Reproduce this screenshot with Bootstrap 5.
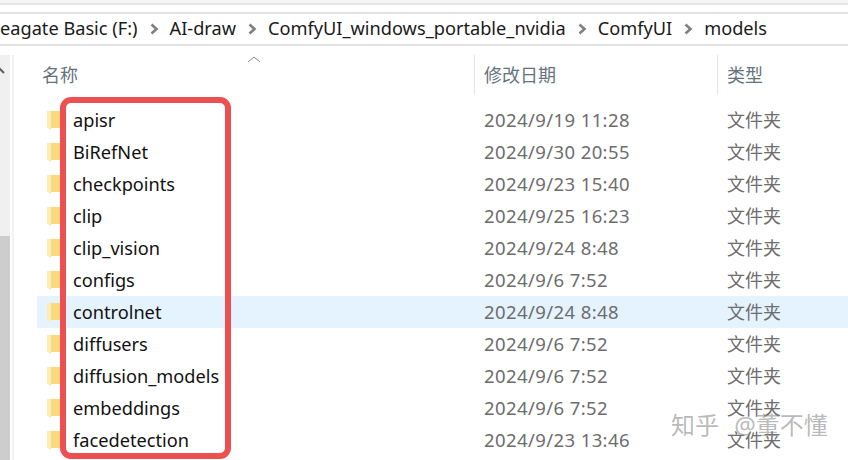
<!DOCTYPE html>
<html lang="en">
<head>
  <meta charset="UTF-8" />
  <title>models</title>
  <link href="https://cdn.jsdelivr.net/npm/bootstrap@5.3.0/dist/css/bootstrap.min.css" rel="stylesheet" />
  <style>
    body {
      width: 848px;
      height: 460px;
      overflow: hidden;
      background: #fff;
      font-family: "Noto Sans", "Noto Sans CJK SC", sans-serif;
      position: relative;
    }
    .top-strip { height: 5px; margin-bottom: 7px; background: #f6f6f6; border-bottom: 2px solid #e6e6e6; }
    .crumbs {
      height: 34px;
      border-top: 2px solid #e2e2e2;
      border-bottom: 2px solid #e2e2e2;
      font-size: 18.2px;
      color: #1a1a1a;
      white-space: nowrap;
      overflow: hidden;
    }
    .crumb-first { margin-left: -10px; }
    .crumb-arrow { width: 32px; height: 12px; flex: none; }
    .main-area { height: 414px; }
    .side-track { width: 10px; margin-top: 9px; margin-right: 2px; background: #f0f0f0; flex: none; position: relative; overflow: hidden; }
    .side-arrow { position: absolute; left: -5px; top: 12px; }
    .side-thumb { height: 224px; background: #cdcdcd; margin-top: 181px; }
    .file-pane { flex: 1; border-left: 2px solid #f1f1f1; margin-top: 9px; padding-left: 23px; }
    .col-name { width: 437px; flex: none; padding-left: 10px; }
    .col-date { width: 243px; flex: none; padding-left: 10px; }
    .col-kind { flex: 1; padding-left: 10px; }
    .head-row { height: 40px; line-height: 40px; margin-bottom: 9px; color: #66727e; font-size: 18px; }
    .head-row .col-name { padding-left: 5px; }
    .head-row .col-date, .head-row .col-kind { border-left: 1px solid #e5e5e5; padding-left: 9px; }
    .file-row { height: 32px; line-height: 32px; font-size: 18.2px; }
    .file-row.picked { background: #e5f3ff; }
    .file-title { color: #111; }
    .col-date.file-muted { color: #6d6d6d; font-size: 18.5px; letter-spacing: .4px; }
    .col-kind.file-muted { color: #6d6d6d; font-size: 18px; }
    .folder-ico { width: 17px; height: 20px; margin-right: 9px; flex: none; }
    .red-box {
      position: absolute;
      left: 60px;
      top: 97px;
      width: 171px;
      height: 362px;
      border: 6px solid #ec5050;
      border-radius: 11px;
      pointer-events: none;
    }
    .sort-mark { position: absolute; left: 247px; top: 55px; }
    .zhihu-mark {
      position: absolute;
      left: 671px;
      top: 408px;
      font-size: 24px;
      line-height: 34px;
      word-spacing: 9px;
      color: rgba(140,140,140,.6);
      white-space: nowrap;
    }
  </style>
</head>
<body>
  <div class="top-strip"></div>
  <div class="crumbs d-flex align-items-center">
    <span class="crumb-first">Seagate Basic (F:)</span>
    <svg class="crumb-arrow" viewBox="0 0 32 12"><path d="M13.5 1.5l5 4.5-5 4.5" fill="none" stroke="#808080" stroke-width="2.6"/></svg>
    <span>AI-draw</span>
    <svg class="crumb-arrow" viewBox="0 0 32 12"><path d="M13.5 1.5l5 4.5-5 4.5" fill="none" stroke="#808080" stroke-width="2.6"/></svg>
    <span>ComfyUI_windows_portable_nvidia</span>
    <svg class="crumb-arrow" viewBox="0 0 32 12"><path d="M13.5 1.5l5 4.5-5 4.5" fill="none" stroke="#808080" stroke-width="2.6"/></svg>
    <span>ComfyUI</span>
    <svg class="crumb-arrow" viewBox="0 0 32 12"><path d="M13.5 1.5l5 4.5-5 4.5" fill="none" stroke="#808080" stroke-width="2.6"/></svg>
    <span>models</span>
  </div>

  <div class="d-flex main-area">
    <div class="side-track">
      <svg class="side-arrow" width="10" height="7" viewBox="0 0 10 7"><path d="M1 6l4-4 4 4" fill="none" stroke="#606060" stroke-width="2"/></svg>
      <div class="side-thumb"></div>
    </div>
    <div class="file-pane">
      <div class="d-flex head-row">
        <div class="col-name">名称</div>
        <div class="col-date">修改日期</div>
        <div class="col-kind">类型</div>
      </div>
      <div id="fileRows"></div>
    </div>
  </div>

  <svg class="sort-mark" width="14" height="8" viewBox="0 0 14 8"><path d="M1 7l6-5 6 5" fill="none" stroke="#888" stroke-width="1"/></svg>
  <div class="red-box"></div>
  <div class="zhihu-mark">知乎 @董不懂</div>

  <script src="https://cdn.jsdelivr.net/npm/bootstrap@5.3.0/dist/js/bootstrap.bundle.min.js"></script>
  <script>
    const files = [
      ["apisr", "2024/9/19 11:28"],
      ["BiRefNet", "2024/9/30 20:55"],
      ["checkpoints", "2024/9/23 15:40"],
      ["clip", "2024/9/25 16:23"],
      ["clip_vision", "2024/9/24 8:48"],
      ["configs", "2024/9/6 7:52"],
      ["controlnet", "2024/9/24 8:48"],
      ["diffusers", "2024/9/6 7:52"],
      ["diffusion_models", "2024/9/6 7:52"],
      ["embeddings", "2024/9/6 7:52"],
      ["facedetection", "2024/9/23 13:46"]
    ];
    const folder = '<svg class="folder-ico" viewBox="0 0 17 20"><path d="M0 1h17v17H0z" fill="#f8da7c"/><path d="M0 1h4v19l-4-2z" fill="#fcecb8"/></svg>';
    document.getElementById("fileRows").innerHTML = files.map((f) =>
      `<div class="d-flex file-row${f[0] === "controlnet" ? " picked" : ""}">
        <div class="col-name d-flex align-items-center"><span class="d-flex">${folder}</span><span class="file-title">${f[0]}</span></div>
        <div class="col-date file-muted">${f[1]}</div>
        <div class="col-kind file-muted">文件夹</div>
      </div>`).join("");
  </script>
</body>
</html>
